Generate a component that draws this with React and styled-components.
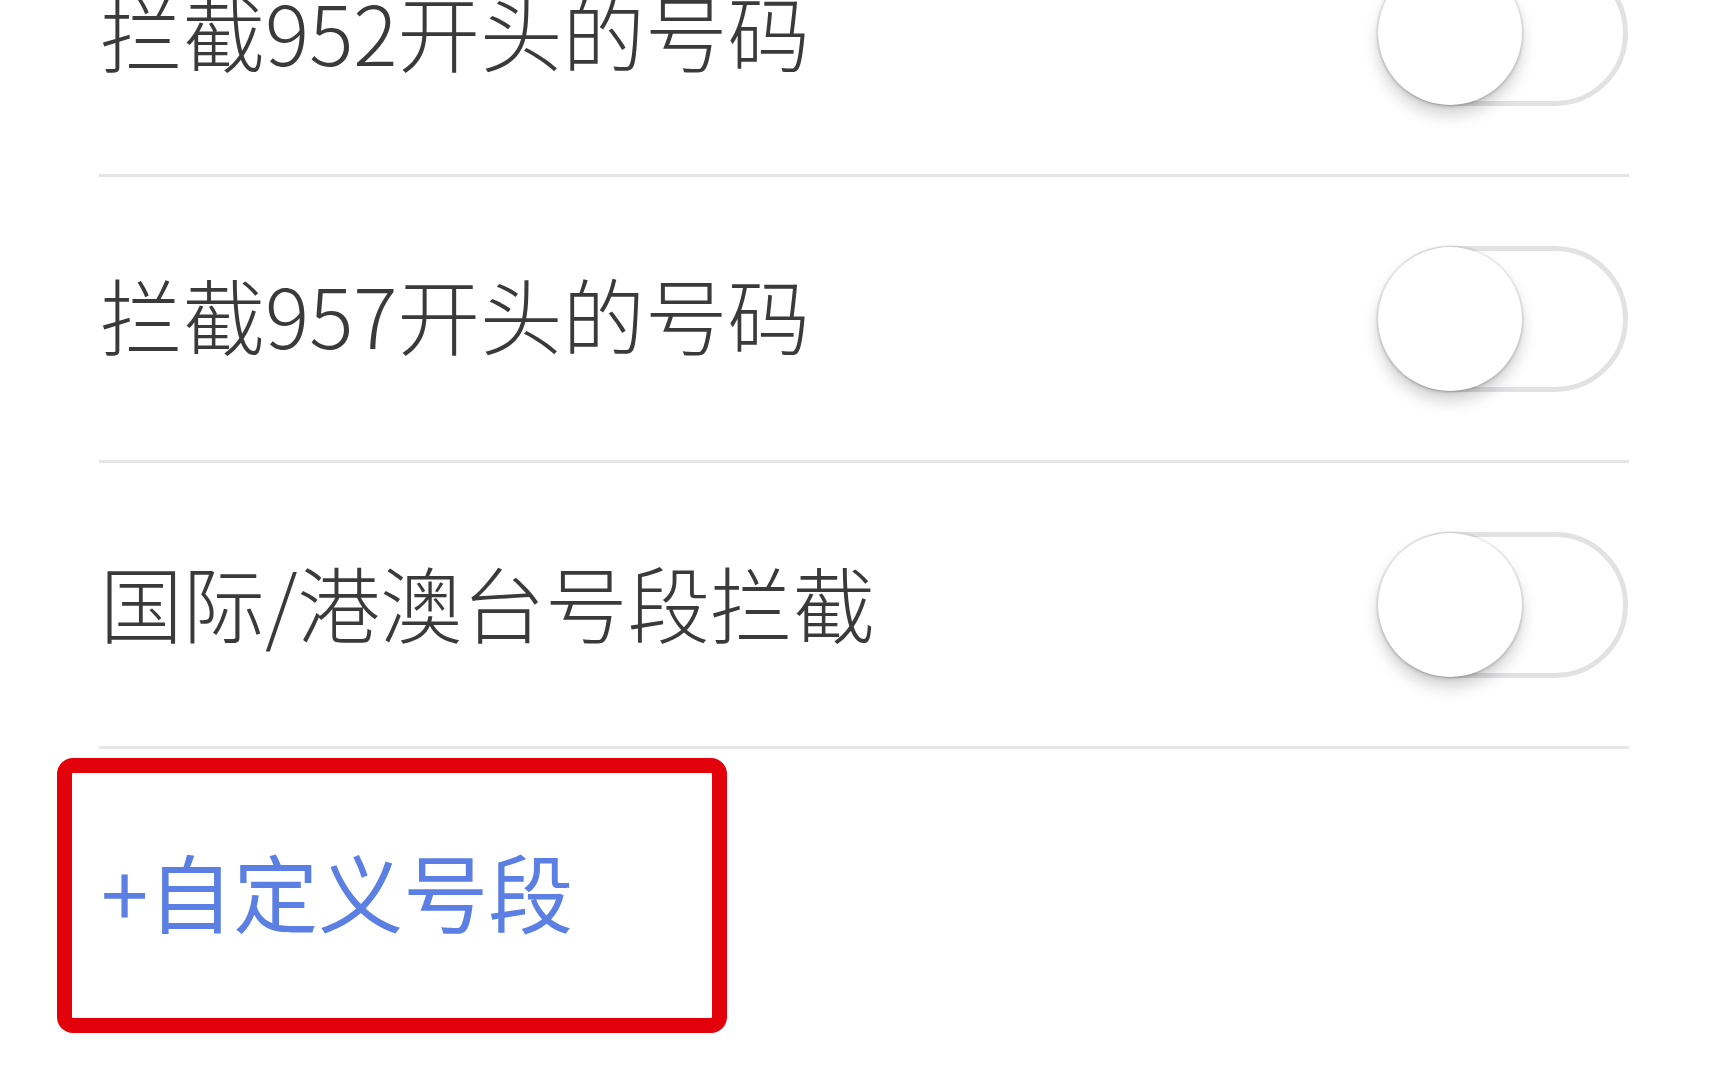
import { useState } from "react";
import styled, { createGlobalStyle } from "styled-components";

const GlobalStyle = createGlobalStyle`
  html, body {
    margin: 0;
    padding: 0;
    background: #ffffff;
    overflow: hidden;
  }
  body {
    font-family: "Noto Sans CJK SC", "Noto Sans", sans-serif;
    -webkit-font-smoothing: antialiased;
  }
`;

const Page = styled.div`
  width: 1728px;
  height: 1080px;
  background: #ffffff;
  overflow: hidden;
`;

const List = styled.ul`
  list-style: none;
  margin: -109px 0 0 99px;
  padding: 0;
  width: 1530px;
`;

const Row = styled.li`
  box-sizing: border-box;
  height: 286px;
  display: flex;
  align-items: center;
  justify-content: space-between;
  padding: 0 1px 0 1px;
  border-bottom: 3px solid #e6e6e8;
`;

const Label = styled.span`
  font-size: 82.5px;
  font-weight: 300;
  line-height: 1;
  color: #3a3a3a;
  margin-top: ${(p) => p.$shift || 0}px;
`;

const Track = styled.div`
  box-sizing: border-box;
  width: 250px;
  height: 146px;
  border-radius: 73px;
  border: 5px solid ${(p) => (p.$on ? "#4cd964" : "#e2e2e4")};
  background: ${(p) => (p.$on ? "#4cd964" : "#ffffff")};
  display: flex;
  align-items: center;
  justify-content: ${(p) => (p.$on ? "flex-end" : "flex-start")};
  cursor: pointer;
`;

const Knob = styled.div`
  flex: none;
  width: 144px;
  height: 144px;
  margin: 0 -5px;
  border-radius: 50%;
  background: #ffffff;
  box-shadow: 0 10px 16px rgba(0, 0, 0, 0.18), 0 2px 4px rgba(0, 0, 0, 0.12),
    0 0 0 2px rgba(0, 0, 0, 0.05);
`;

const AddBox = styled.div`
  box-sizing: border-box;
  width: 670px;
  height: 275px;
  margin: 9px 0 0 57px;
  border: 15px solid #e2000b;
  border-radius: 16px;
  display: flex;
  align-items: center;
  padding-left: 29px;
`;

const AddLink = styled.a`
  font-size: 85px;
  font-weight: 400;
  line-height: 1;
  color: #5b7fe2;
  text-decoration: none;
  cursor: pointer;
  margin-top: -12px;
`;

function Switch({ on, onToggle }) {
  return (
    <Track role="switch" aria-checked={on} $on={on} onClick={onToggle}>
      <Knob />
    </Track>
  );
}

const ITEMS = [
  { id: "952", label: "拦截952开头的号码", shift: -4 },
  { id: "957", label: "拦截957开头的号码", shift: -10 },
  { id: "intl", label: "国际/港澳台号段拦截", shift: -7 },
];

export default function App() {
  const [checked, setChecked] = useState({});

  const toggle = (id) => {
    setChecked((prev) => ({ ...prev, [id]: !prev[id] }));
  };

  return (
    <Page>
      <GlobalStyle />
      <List>
        {ITEMS.map((item) => (
          <Row key={item.id}>
            <Label $shift={item.shift}>{item.label}</Label>
            <Switch on={!!checked[item.id]} onToggle={() => toggle(item.id)} />
          </Row>
        ))}
      </List>
      <AddBox>
        <AddLink>+自定义号段</AddLink>
      </AddBox>
    </Page>
  );
}
